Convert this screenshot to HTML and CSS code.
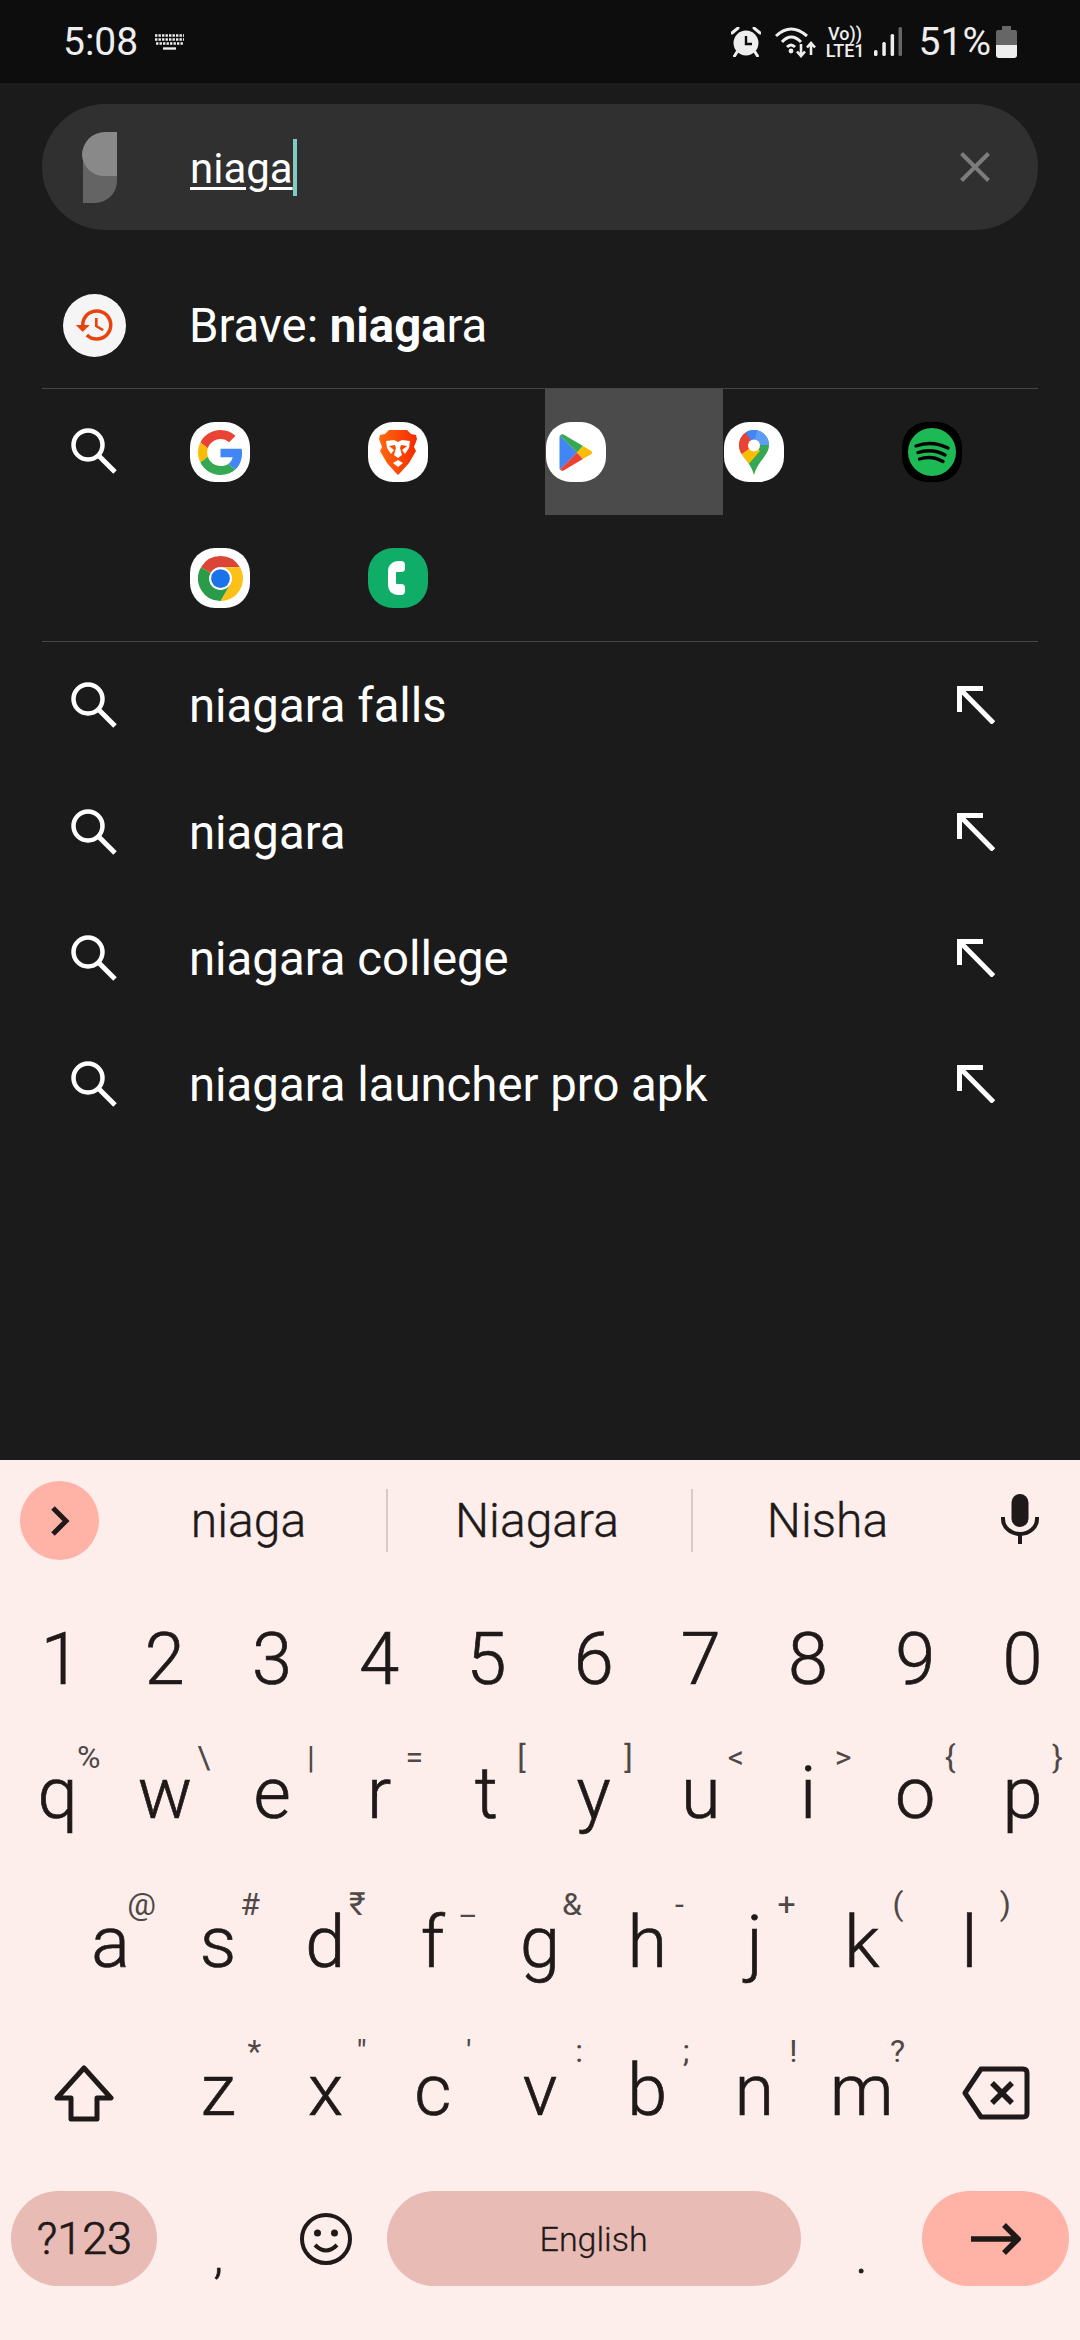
FILE: index.html
```html
<!DOCTYPE html>
<html lang="en">
<head>
<meta charset="utf-8">
<title>Search</title>
<link rel="stylesheet" href="styles.css">
</head>
<body>
<div class="screen">
  <header class="status">
    <div class="status-left">
      <span class="time">5:08</span>
      <svg class="ic-kbd" viewBox="0 0 29 16"><path d="M0 1.5H29M0 5.5H29M1 9.5H28" stroke="#eee" stroke-width="2.4" stroke-dasharray="2.4 1.1" fill="none"/><path d="M8 14.5H21" stroke="#eee" stroke-width="2.4"/></svg>
    </div>
    <div class="status-right">
      <svg class="ic-alarm" viewBox="0 0 30 30"><path d="M1 6 7 1M29 6 23 1M6 25 3.500 29M24 25 26.500 29" stroke="#eee" stroke-width="3" stroke-linecap="round" fill="none"/><circle cx="15" cy="16" r="12.500" fill="#eee"/><path d="M15 9V17H21" stroke="#0d0d0d" stroke-width="2.400" fill="none"/></svg>
      <svg class="ic-wifi" viewBox="0 0 44 32"><path d="M2 10Q17-4 33 10M8 16Q17 6 27 16M13 21Q17 17 21 21" stroke="#eee" stroke-width="3" fill="none"/><circle cx="17" cy="25" r="2.400" fill="#eee"/><path d="M27 18V30M23 25.500l4 4.500 4-4.500M37 29V18M33 21.500l4-4.500 4 4.500" stroke="#eee" stroke-width="2.600" fill="none"/></svg>
      <div class="volte"><span>Vo))</span><span>LTE1</span></div>
      <svg class="ic-signal" viewBox="0 0 30 30"><rect x="0" y="23" width="3.500" height="6" rx="1.500" fill="#eee"/><rect x="8.300" y="15" width="3.500" height="14" rx="1.500" fill="#eee"/><rect x="16.600" y="7" width="3.500" height="22" rx="1.500" fill="#eee"/><rect x="24.500" y="0" width="3.500" height="29" rx="1.500" fill="#666"/></svg>
      <span class="pct">51%</span>
      <svg class="ic-batt" viewBox="0 0 21 32"><path d="M6 0H15V4H19Q21 4 21 6V19H0V6Q0 4 2 4H6Z" fill="#666"/><path d="M0 19H21V29Q21 32 18 32H3Q0 32 0 29Z" fill="#eee"/></svg>
    </div>
  </header>

  <main class="results">
    <div class="searchbar">
      <svg class="logo" viewBox="0 0 35 71"><path d="M1 19V71H13A22 22 0 0 0 35 49V19Z" fill="#646464"/><path d="M35 0H23A23 23 0 0 0 0 23A22 22 0 0 0 23 44H35Z" fill="#898989"/></svg>
      <div class="query"><span class="typed">niaga</span><span class="cursor"></span></div>
      <svg class="clear" viewBox="0 0 30 30"><path d="M1.500 1.500 28.500 28.500M28.500 1.500 1.500 28.500" stroke="#7c7c7c" stroke-width="4" fill="none"/></svg>
    </div>

    <div class="history-row">
      <div class="history-badge">
        <svg class="ic-history" viewBox="0 0 24 24"><path fill="#e8420f" d="M13 3a9 9 0 0 0-9 9H1l3.890 3.890.07.14L9 12H6c0-3.870 3.130-7 7-7s7 3.130 7 7-3.130 7-7 7c-1.930 0-3.680-.79-4.940-2.060l-1.420 1.420A8.954 8.954 0 0 0 13 21a9 9 0 0 0 0-18zm-1 5v5l4.280 2.540.72-1.210-3.500-2.080V8H12z"/></svg>
      </div>
      <div class="row-text">Brave: <b>niaga</b>ra</div>
    </div>

    <div class="apps-block">
      <svg class="ic-search apps-search" viewBox="0 0 46 46"><circle cx="17" cy="17" r="14.500" stroke="#fff" stroke-width="4.500" fill="none"/><path d="M27 27 44 44" stroke="#fff" stroke-width="5" fill="none"/></svg>
      <div class="apps">
        <div class="cell"><div class="app white"><svg class="g" viewBox="0 0 48 48"><path fill="#EA4335" d="M24 9.500c3.540 0 6.710 1.220 9.210 3.600l6.850-6.850C35.900 2.380 30.470 0 24 0 14.620 0 6.510 5.380 2.560 13.220l7.980 6.190C12.430 13.720 17.740 9.500 24 9.500z"/><path fill="#4285F4" d="M46.980 24.550c0-1.570-.15-3.090-.38-4.550H24v9.020h12.940c-.58 2.960-2.260 5.480-4.780 7.180l7.730 6c4.510-4.180 7.090-10.360 7.090-17.650z"/><path fill="#FBBC05" d="M10.530 28.590c-.48-1.450-.76-2.990-.76-4.590s.27-3.140.76-4.590l-7.980-6.190C.92 16.460 0 20.120 0 24c0 3.880.92 7.540 2.560 10.780l7.970-6.190z"/><path fill="#34A853" d="M24 48c6.480 0 11.930-2.130 15.890-5.810l-7.730-6c-2.150 1.450-4.920 2.300-8.160 2.300-6.260 0-11.570-4.220-13.470-9.910l-7.980 6.190C6.510 42.620 14.620 48 24 48z"/></svg></div></div>
        <div class="cell"><div class="app white"><svg class="lion" viewBox="0 0 38 45"><defs><linearGradient id="lg" x1="0" y1="0" x2="1" y2="0"><stop offset="0" stop-color="#ff6a10"/><stop offset="1" stop-color="#f52a00"/></linearGradient></defs><path fill="url(#lg)" d="M10 0H28L32 4 37 5 38 9 35 17 37 21 30 33 22 42 19 45 16 42 8 33 1 21 3 17 0 9 1 5 6 4Z"/><path fill="#fff" d="M7 11 15 10 19 12 23 10 31 11 30 18 26 24 23 20 28 16 22 15 21 18 23 25 19 28 15 25 17 18 16 15 10 16 15 20 12 24 8 18ZM14 33 19 30 24 33 19 37Z"/></svg></div></div>
        <div class="cell cell-active"><div class="app white"><svg class="play" viewBox="0 0 34 37"><path fill="#4285F4" d="M1 1.500Q.5 2 .5 3V34Q.5 35 1 35.500L18 18.500Z"/><path fill="#34A853" d="M1 1.500Q3-.5 5 .8L24 12 18 18.500Z"/><path fill="#EA4335" d="M1 35.500Q3 37.500 5 36.200L24 25 18 18.500Z"/><path fill="#FBBC05" d="M24 12 32 16.700Q34.500 18.500 32 20.300L24 25 18 18.500Z"/></svg></div></div>
        <div class="cell"><div class="app white"><svg class="maps" viewBox="0 0 30 45"><defs><clipPath id="pin"><path d="M15 0A15 15 0 0 1 30 15C30 26 19 30 15 45 11 30 0 26 0 15A15 15 0 0 1 15 0Z"/></clipPath></defs><g clip-path="url(#pin)"><rect width="30" height="45" fill="#34A853"/><path fill="#FBBC05" d="M0 30V18L15 15 21 21 8 36Z"/><path fill="#EA4335" d="M0 0H7L15 15 0 26Z"/><path fill="#4285F4" d="M5 0H22V3L15 15Z"/><path fill="#5f9cf5" d="M18 0H30V15L15 15Z"/></g><circle cx="15" cy="15.500" r="6" fill="#fff"/></svg></div></div>
        <div class="cell"><div class="app black"><svg class="spot" viewBox="0 0 48 48"><circle cx="24" cy="24" r="24" fill="#1db954"/><path d="M8 18Q24 12 40 20M10 24.500Q24 20 37 27M11.500 31Q24 27 35 33.500" stroke="#000" stroke-width="3.400" stroke-linecap="round" fill="none"/></svg></div></div>
        <div class="cell"><div class="app white"><svg class="chrome" viewBox="0 0 48 48"><path fill="#DB4437" d="M24 0A24 24 0 0 1 44.780 12H24A12 12 0 0 0 13.600 18L3.200 12A24 24 0 0 1 24 0Z"/><path fill="#FBC116" d="M44.780 12A24 24 0 0 1 24 48L34.400 30A12 12 0 0 0 24 12Z"/><path fill="#2A9B48" d="M3.200 12A24 24 0 0 0 24 48L34.400 30A12 12 0 0 1 13.600 18Z"/><circle cx="24" cy="24" r="12" fill="#fff"/><circle cx="24" cy="24" r="10" fill="#1a73e8"/></svg></div></div>
        <div class="cell"><div class="app green"><svg class="phone" viewBox="0 0 60 60"><path fill="#fff" d="M31 13C24 13 20 17 20 24V36C20 43 24 47 31 47H33C36 47 37 45 37 43V39C37 37 35 36 33 36H29C28.500 36 28 35.500 28 35V25C28 24.500 28.500 24 29 24H33C35 24 37 23 37 21V17C37 15 36 13 33 13Z"/></svg></div></div>
      </div>
    </div>

    <div class="suggestion"><svg class="ic-search" viewBox="0 0 46 46"><circle cx="17" cy="17" r="14.500" stroke="#fff" stroke-width="4.500" fill="none"/><path d="M27 27 44 44" stroke="#fff" stroke-width="5" fill="none"/></svg><div class="row-text">niagara falls</div><svg class="ic-fill" viewBox="0 0 38 38"><path d="M26 2.500H2.500V26M2.500 2.500 36.500 37" stroke="#fff" stroke-width="5" fill="none"/></svg></div>
    <div class="suggestion"><svg class="ic-search" viewBox="0 0 46 46"><circle cx="17" cy="17" r="14.500" stroke="#fff" stroke-width="4.500" fill="none"/><path d="M27 27 44 44" stroke="#fff" stroke-width="5" fill="none"/></svg><div class="row-text">niagara</div><svg class="ic-fill" viewBox="0 0 38 38"><path d="M26 2.500H2.500V26M2.500 2.500 36.500 37" stroke="#fff" stroke-width="5" fill="none"/></svg></div>
    <div class="suggestion"><svg class="ic-search" viewBox="0 0 46 46"><circle cx="17" cy="17" r="14.500" stroke="#fff" stroke-width="4.500" fill="none"/><path d="M27 27 44 44" stroke="#fff" stroke-width="5" fill="none"/></svg><div class="row-text">niagara college</div><svg class="ic-fill" viewBox="0 0 38 38"><path d="M26 2.500H2.500V26M2.500 2.500 36.500 37" stroke="#fff" stroke-width="5" fill="none"/></svg></div>
    <div class="suggestion"><svg class="ic-search" viewBox="0 0 46 46"><circle cx="17" cy="17" r="14.500" stroke="#fff" stroke-width="4.500" fill="none"/><path d="M27 27 44 44" stroke="#fff" stroke-width="5" fill="none"/></svg><div class="row-text">niagara launcher pro apk</div><svg class="ic-fill" viewBox="0 0 38 38"><path d="M26 2.500H2.500V26M2.500 2.500 36.500 37" stroke="#fff" stroke-width="5" fill="none"/></svg></div>
  </main>

  <section class="keyboard">
    <div class="strip">
      <div class="strip-toggle"><svg class="ic-chev" viewBox="0 0 20 30"><path d="M3 2 16 15 3 28" stroke="#1f1a19" stroke-width="5" fill="none"/></svg></div>
      <div class="word word-a">niaga</div>
      <div class="sep"></div>
      <div class="word word-b">Niagara</div>
      <div class="sep"></div>
      <div class="word word-c">Nisha</div>
      <svg class="ic-mic" viewBox="0 0 38 50"><rect x="10.500" y="0" width="17" height="33" rx="8.500" fill="#1f1a19"/><path d="M2 23V25A17 15 0 0 0 36 25V23M19 40V50" stroke="#1f1a19" stroke-width="4" fill="none"/></svg>
    </div>

    <div class="row row-num">
      <div class="key"><span class="digit-one">1</span></div><div class="key">2</div><div class="key">3</div><div class="key">4</div><div class="key">5</div><div class="key">6</div><div class="key">7</div><div class="key">8</div><div class="key">9</div><div class="key">0</div>
    </div>
    <div class="row row-top">
      <div class="key">q<span class="hint">%</span></div>
      <div class="key">w<span class="hint">\</span></div>
      <div class="key">e<span class="hint">|</span></div>
      <div class="key">r<span class="hint">=</span></div>
      <div class="key">t<span class="hint">[</span></div>
      <div class="key">y<span class="hint">]</span></div>
      <div class="key">u<span class="hint">&lt;</span></div>
      <div class="key">i<span class="hint">&gt;</span></div>
      <div class="key">o<span class="hint">{</span></div>
      <div class="key">p<span class="hint">}</span></div>
    </div>
    <div class="row row-home">
      <div class="key">a<span class="hint">@</span></div>
      <div class="key">s<span class="hint">#</span></div>
      <div class="key">d<span class="hint">₹</span></div>
      <div class="key">f<span class="hint">_</span></div>
      <div class="key">g<span class="hint">&amp;</span></div>
      <div class="key">h<span class="hint">-</span></div>
      <div class="key">j<span class="hint">+</span></div>
      <div class="key">k<span class="hint">(</span></div>
      <div class="key">l<span class="hint">)</span></div>
    </div>
    <div class="row row-shift">
      <div class="key key-wide"><svg class="ic-shift" viewBox="0 0 60 57"><path d="M30 3 57 33H43V54H17V33H3Z" stroke="#1f1a19" stroke-width="5" stroke-linejoin="round" fill="none"/></svg></div>
      <div class="key">z<span class="hint">*</span></div>
      <div class="key">x<span class="hint">"</span></div>
      <div class="key">c<span class="hint">'</span></div>
      <div class="key">v<span class="hint">:</span></div>
      <div class="key">b<span class="hint">;</span></div>
      <div class="key">n<span class="hint">!</span></div>
      <div class="key">m<span class="hint">?</span></div>
      <div class="key key-wide"><svg class="ic-back" viewBox="0 0 68 54"><path d="M19 3H61Q65 3 65 7V47Q65 51 61 51H19L3 27Z" stroke="#1f1a19" stroke-width="5" stroke-linejoin="round" fill="none"/><path d="M30 17 50 37M50 17 30 37" stroke="#1f1a19" stroke-width="5.500" fill="none"/></svg></div>
    </div>
    <div class="row row-bottom">
      <div class="key-fn"><div class="pill pill-mod">?123</div></div>
      <div class="key key-small"><span class="comma">,</span></div>
      <div class="key key-small"><svg class="ic-emoji" viewBox="0 0 52 52"><circle cx="26" cy="26" r="24" stroke="#1f1a19" stroke-width="4" fill="none"/><circle cx="17.500" cy="20" r="3.500" fill="#1f1a19"/><circle cx="34.500" cy="20" r="3.500" fill="#1f1a19"/><path d="M15 32Q26 43 37 32" stroke="#1f1a19" stroke-width="4" fill="none"/></svg></div>
      <div class="key-space"><div class="pill pill-space">English</div></div>
      <div class="key key-small"><span class="comma">.</span></div>
      <div class="key-fn"><div class="pill pill-go"><svg class="ic-go" viewBox="0 0 50 32"><path d="M0 16H47M33 2 47 16 33 30" stroke="#1f1a19" stroke-width="5.500" fill="none"/></svg></div></div>
    </div>
  </section>
</div>
</body>
</html>
```
FILE: styles.css
```css
* { box-sizing: border-box; }
html, body { margin: 0; padding: 0; }
body { width: 1080px; height: 2340px; overflow: hidden; background: #1b1b1b; font-family: Roboto, "Liberation Sans", sans-serif; }
svg { display: block; flex: none; }
.screen { width: 1080px; height: 2340px; display: flex; flex-direction: column; }

.status { height: 83px; flex: none; background: #0d0d0d; color: #eee; display: flex; align-items: center; justify-content: space-between; padding: 0 63px 0 63px; }
.status-left, .status-right { display: flex; align-items: center; }
.time { font-size: 39px; line-height: 40px; }
.pct { font-size: 39px; line-height: 40px; }
.ic-kbd { width: 29px; height: 16px; margin-left: 17px; }
.ic-alarm { width: 30px; height: 30px; }
.ic-wifi { width: 44px; height: 32px; margin-left: 13px; }
.volte { display: flex; flex-direction: column; align-items: center; width: 39px; margin-left: 8px; font-size: 18px; line-height: 17px; font-weight: 500; }
.ic-signal { width: 30px; height: 30px; margin-left: 9px; }
.pct { margin-left: 15px; }
.ic-batt { width: 21px; height: 32px; margin-left: 5px; }

.results { flex: 1; display: flex; flex-direction: column; padding: 21px 42px 0; }
.searchbar { height: 126px; border-radius: 63px; background: #303030; display: flex; align-items: center; padding-left: 40px; flex: none; }
.logo { width: 35px; height: 71px; }
.query { display: flex; align-items: center; margin-left: 73px; flex: 1; color: #fff; font-size: 42px; height: 57px; padding-top: 0; }
.typed { text-decoration: underline; text-decoration-thickness: 3px; text-underline-offset: 4px; line-height: 57px; padding-top: 2px; }
.cursor { width: 4px; height: 57px; background: #7fcdc2; }
.clear { width: 30px; height: 30px; margin-right: 48px; }

.row-text { font-size: 47.3px; color: #fff; line-height: 54px; flex: 1; white-space: nowrap; padding-top: 2px; }
.row-text b { font-weight: 700; }
.history-row { margin-top: 32px; height: 127px; display: flex; align-items: center; border-bottom: 1px solid #454545; flex: none; }
.history-badge { width: 63px; height: 63px; margin: 0 63px 0 21px; border-radius: 50%; background: #f5f5f5; display: flex; align-items: center; justify-content: center; }
.ic-history { width: 42px; height: 42px; }

.apps-block { display: flex; height: 253px; border-bottom: 1px solid #454545; flex: none; }
.ic-search { width: 46px; height: 46px; margin: 0 72px 0 29px; }
.apps-search { margin-top: 39px; }
.apps { display: grid; grid-template-columns: repeat(5, 178px); grid-auto-rows: 126px; flex: none; }
.cell { display: flex; align-items: center; }
.cell-active { background: #4b4b4b; }
.app { width: 60px; height: 60px; border-radius: 25px; display: flex; align-items: center; justify-content: center; margin-left: 1px; }
.white { background: #fff; }
.black { background: #000; }
.green { background: #10ad68; }
.g { width: 45px; height: 45px; }
.lion { width: 38px; height: 45px; }
.play { width: 34px; height: 37px; }
.maps { width: 30px; height: 45px; }
.spot { width: 48px; height: 48px; }
.chrome { width: 45px; height: 45px; }
.phone { width: 60px; height: 60px; }

.suggestion { height: 126.4px; display: flex; align-items: center; flex: none; }
.ic-fill { width: 38px; height: 38px; margin-right: 43px; }

.keyboard { height: 880px; flex: none; background: #fdeeec; color: #1f1a19; display: flex; flex-direction: column; font-weight: 300; -webkit-text-stroke: 0.7px #1f1a19; }
.strip { height: 133px; flex: none; display: flex; align-items: center; padding: 0 0 14px 20px; }
.strip-toggle { width: 79px; height: 79px; border-radius: 50%; background: #ffb3a7; display: flex; align-items: center; justify-content: center; flex: none; margin-top: 2px; }
.ic-chev { width: 20px; height: 30px; }
.word { font-size: 48px; line-height: 54px; text-align: center; margin-top: 2px; flex: none; -webkit-text-stroke: 0.4px #1f1a19; }
.word-a { width: 287px; padding-left: 12px; }
.word-b { width: 303px; padding-right: 5px; }
.word-c { width: 266px; padding-left: 3px; }
.sep { width: 2px; height: 63px; background: #d9c9c7; margin-top: 2px; flex: none; }
.ic-mic { width: 38px; height: 50px; margin-left: 42px; margin-top: -2px; }

.row { display: flex; padding: 0 4px; flex: none; }
.key { flex: 1 1 0; min-width: 0; position: relative; font-size: 72px; line-height: 134px; text-align: center; display: flex; align-items: center; justify-content: center; }
.digit-one { margin-left: 6px; }
.row-num, .row-top { height: 134px; }
.row-home { height: 156px; padding: 8px 57px 0; }
.row-home .key { line-height: 148px; }
.row-shift { height: 148px; }
.row-shift .key { line-height: 148px; }
.key-wide { flex: 1.5 1 0; }
.hint { position: absolute; left: calc(50% + 35px); top: 12px; transform: translateX(-50%); font-size: 32px; line-height: 36px; color: #4f4846; -webkit-text-stroke: 0; font-weight: 400; }
.row-home .hint { top: 17px; left: calc(50% + 32px); }
.row-shift .hint { top: 16px; left: calc(50% + 36px); }
.row-top .key:nth-child(1) .hint { margin-left: -4px; }
.row-top .key:nth-child(2) .hint, .row-top .key:nth-child(3) .hint { margin-left: 4px; }
.row-home .key:nth-child(1) .hint { margin-left: -1px; }
.row-home .key:nth-child(4) .hint { margin-left: 3px; }
.row-home .key:nth-child(8) .hint, .row-home .key:nth-child(9) .hint { margin-left: 4px; }
.row-shift .key:nth-child(5) .hint, .row-shift .key:nth-child(6) .hint, .row-shift .key:nth-child(7) .hint { margin-left: 3px; }
.ic-shift { width: 60px; height: 57px; margin-top: 4px; }
.ic-back { width: 68px; height: 54px; margin-top: 4px; }

.row-bottom { height: 121px; padding-top: 26px; }
.row-bottom .key { line-height: 95px; }
.key-fn { flex: 1.5 1 0; display: flex; justify-content: center; }
.key-small { font-size: 50px; }
.key-space { flex: 4 1 0; display: flex; justify-content: center; }
.pill { height: 95px; border-radius: 47.5px; display: flex; align-items: center; justify-content: center; }
.pill-mod { width: 146px; background: #e8bbb5; font-size: 45px; }
.pill-space { width: 414px; background: #e8bbb5; font-size: 34px; -webkit-text-stroke: 0.3px #1f1a19; }
.pill-go { width: 147px; background: #ffb3a7; }
.ic-go { width: 50px; height: 32px; }
.ic-emoji { width: 52px; height: 52px; }
.comma { line-height: 46px; margin-top: 34px; }
```
